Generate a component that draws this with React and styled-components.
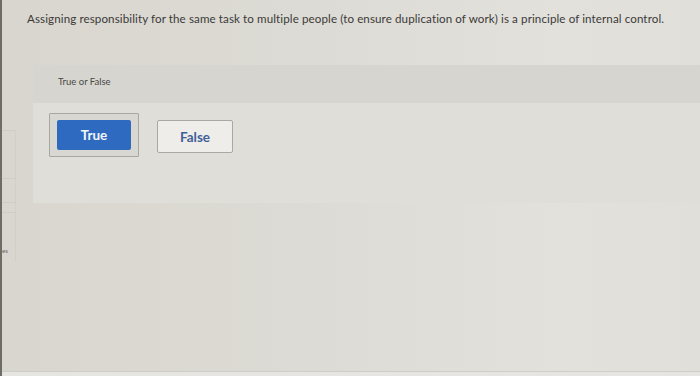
import React from "react";
import styled, { createGlobalStyle } from "styled-components";

const Global = createGlobalStyle`
  html, body { margin: 0; padding: 0; }
  body {
    width: 700px; height: 376px; overflow: hidden;
    font-family: Lato, "Open Sans", sans-serif;
  }
`;

const Page = styled.div`
  width: 700px;
  height: 376px;
  display: flex;
  background: linear-gradient(90deg, #d9d6cf 0%, #dddbd5 45%, #e2e1dc 80%, #e0dfda 100%);
  box-sizing: border-box;
  border-left: 2px solid #6f6b65;
  position: relative;
  overflow: hidden;
`;

const Sidebar = styled.div`
  width: 14px;
  flex: none;
  display: flex;
  flex-direction: column;
  padding-top: 130px;
`;

const SideCell = styled.div`
  height: ${(p) => p.h}px;
  border-top: 1px solid #cfccc5;
  border-right: 1px solid #d2cfc8;
  box-sizing: border-box;
  font-size: 6px;
  color: #6a6660;
  display: flex;
  align-items: flex-end;
  padding-bottom: 8px;
`;

const Main = styled.div`
  flex: 1;
  display: flex;
  flex-direction: column;
  padding-top: 10px;
`;

const Question = styled.p`
  margin: 0 0 0 11px;
  font-size: 11.6px;
  line-height: 17px;
  color: #3b3a38;
  letter-spacing: 0.1px;
  white-space: nowrap;
`;

const Panel = styled.div`
  margin: 38px 0 0 17px;
  height: 138px;
  background: #dfded9;
  display: flex;
  flex-direction: column;
`;

const PanelHead = styled.div`
  height: 38px;
  background: #d6d5cf;
  box-sizing: border-box;
  padding: 11px 0 0 25px;
  font-size: 9.5px;
  color: #4a4946;
`;

const Choices = styled.div`
  display: flex;
  align-items: flex-start;
  gap: 18px;
  padding: 10px 0 0 16px;
`;

const Selected = styled.div`
  padding: 6px 7px;
  border: 1px solid #a9a7a3;
  background: #d8d7d2;
  border-radius: 1px;
`;

const Btn = styled.button`
  width: ${(p) => (p.$on ? 74 : 76)}px;
  height: ${(p) => (p.$on ? 30 : 33)}px;
  margin-top: ${(p) => (p.$on ? 0 : 7)}px;
  border: ${(p) => (p.$on ? "none" : "1px solid #a9a8a4")};
  border-radius: 2px;
  background: ${(p) => (p.$on ? "#2e6bc0" : "#eeede9")};
  color: ${(p) => (p.$on ? "#f4f6fa" : "#41609a")};
  font-family: Lato, "Open Sans", sans-serif;
  font-weight: 700;
  font-size: 13.5px;
  padding: 0;
  box-sizing: border-box;
`;

const BottomLine = styled.div`
  position: absolute;
  left: 0; right: 0; bottom: 0;
  height: 4px;
  border-top: 1px solid #cfcdc7;
  background: #e6e5e1;
`;

export default function App() {
  return (
    <>
      <Global />
      <Page>
        <Sidebar>
          <SideCell h={48} />
          <SideCell h={24} />
          <SideCell h={10} />
          <SideCell h={50}>es</SideCell>
        </Sidebar>
        <Main>
          <Question>
            Assigning responsibility for the same task to multiple people (to ensure duplication of work) is a principle of internal control.
          </Question>
          <Panel>
            <PanelHead>True or False</PanelHead>
            <Choices>
              <Selected>
                <Btn $on>True</Btn>
              </Selected>
              <Btn>False</Btn>
            </Choices>
          </Panel>
        </Main>
        <BottomLine />
      </Page>
    </>
  );
}
